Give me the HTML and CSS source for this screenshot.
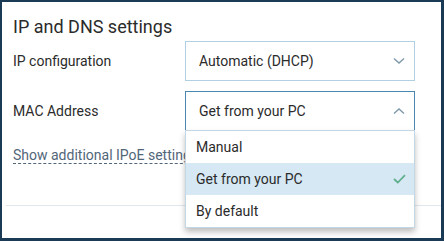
FILE: index.html
```html
<!DOCTYPE html>
<html>
<head>
<meta charset="utf-8">
<link rel="stylesheet" href="styles.css">
</head>
<body>
<div class="frame">
  <div class="content">
    <h2 class="title">IP and DNS settings</h2>
    <div class="row">
      <div class="label">IP configuration</div>
      <div class="select">
        <span>Automatic (DHCP)</span>
        <svg class="chev" width="12" height="8" viewBox="0 0 12 8"><path d="M1 1.5 L6 6 L11 1.5" fill="none" stroke="#7f98aa" stroke-width="1.4"/></svg>
      </div>
    </div>
    <div class="row">
      <div class="label">MAC Address</div>
      <div class="select-wrap">
        <div class="select open">
          <span>Get from your PC</span>
          <svg class="chev" width="12" height="8" viewBox="0 0 12 8"><path d="M1 6.5 L6 2 L11 6.5" fill="none" stroke="#7f98aa" stroke-width="1.4"/></svg>
        </div>
        <ul class="menu">
          <li>Manual</li>
          <li class="active">Get from your PC
            <svg class="check" width="13" height="10" viewBox="0 0 13 10"><path d="M1 5 L4.8 8.5 L12 1.2" fill="none" stroke="#5fae8c" stroke-width="1.7"/></svg>
          </li>
          <li>By default</li>
        </ul>
      </div>
    </div>
    <div class="linkrow"><span class="link">Show additional IPoE settings</span></div>
  </div>
  <div class="divider"></div>
</div>
</body>
</html>
```
FILE: styles.css
```css
html, body { margin: 0; padding: 0; background: #1b3a55; }
body { width: 444px; height: 241px; overflow: hidden; font-family: Roboto, "Noto Sans", sans-serif; }
.frame {
  box-sizing: border-box;
  width: 444px; height: 241px;
  border: 2px solid #1b3a55;
  border-bottom-width: 3px;
  border-right-width: 3px;
  background: #ffffff;
  padding: 0 0 0 4px;
  overflow: hidden;
}
.content { padding: 0 25px 0 7px; }
.title {
  margin: 0; padding-top: 14px;
  font-size: 18px; font-weight: 400; line-height: 22px;
  color: #2b2b2b;
}
.row {
  display: grid;
  grid-template-columns: 172px 230px;
  align-items: center;
  margin-top: 10px;
}
.title + .row { margin-top: 3px; }
.label { font-size: 14px; color: #2b2b2b; }
.select {
  box-sizing: border-box;
  height: 40px;
  border: 1px solid #b3d0e2;
  display: flex; align-items: center; justify-content: space-between;
  padding: 0 9px 0 13px;
  font-size: 14px; color: #2b2b2b;
  background: #fff;
}
.select.open { border-color: #4b87b0; }
.select-wrap { position: relative; }
.chev { display: block; }
.menu {
  position: absolute; left: 0; right: 0; top: 39px;
  margin: 0; padding: 0; list-style: none;
  background: #fff;
  border: 1px solid #c3d6e3;
  box-shadow: 0 4px 6px rgba(0,0,0,0.25);
  z-index: 2;
}
.menu li {
  height: 32px; box-sizing: border-box;
  display: flex; align-items: center; justify-content: space-between;
  padding: 0 8px 0 10px;
  font-size: 14px; color: #2b2b2b;
}
.menu li.active { background: #d5e8f3; }
.check { display: block; }
.linkrow { margin-top: 14px; height: 20px; }
.link {
  font-size: 14px; color: #52667a;
  border-bottom: 1px dashed #52667a;
  padding-bottom: 0;
  white-space: nowrap;
}
.divider { height: 1px; background: #dfe6ec; margin-top: 40px; }
```
